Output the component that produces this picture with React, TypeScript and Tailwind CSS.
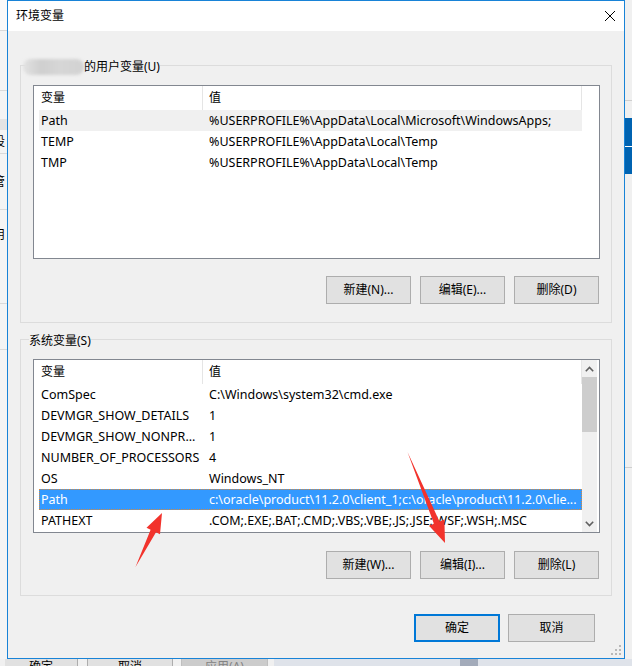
import React from "react";

const FONT = "font-['Noto_Sans','Noto_Sans_CJK_SC',sans-serif]";

const userVars: [string, string][] = [
  ["Path", "%USERPROFILE%\\AppData\\Local\\Microsoft\\WindowsApps;"],
  ["TEMP", "%USERPROFILE%\\AppData\\Local\\Temp"],
  ["TMP", "%USERPROFILE%\\AppData\\Local\\Temp"],
];

const sysVars: [string, string][] = [
  ["ComSpec", "C:\\Windows\\system32\\cmd.exe"],
  ["DEVMGR_SHOW_DETAILS", "1"],
  ["DEVMGR_SHOW_NONPR...", "1"],
  ["NUMBER_OF_PROCESSORS", "4"],
  ["OS", "Windows_NT"],
  ["Path", "c:\\oracle\\product\\11.2.0\\client_1;c:\\oracle\\product\\11.2.0\\clie..."],
  ["PATHEXT", ".COM;.EXE;.BAT;.CMD;.VBS;.VBE;.JS;.JSE;.WSF;.WSH;.MSC"],
];

const Row = ({ name, value, state }: { name: string; value: string; state?: "gray" | "blue" }) => {
  const cls =
    state === "blue"
      ? "bg-[#3399ff] text-white border border-dotted border-[#d9893a]"
      : state === "gray"
      ? "bg-[#f0f0f0] border border-transparent"
      : "border border-transparent";
  return (
    <div className={`flex h-[21px] items-center pt-[2px] text-[12.5px] ${cls}`}>
      <div className="w-[162px] pl-[1px] overflow-hidden whitespace-nowrap">{name}</div>
      <div className="flex-1 pl-[7px] overflow-hidden whitespace-nowrap">{value}</div>
    </div>
  );
};

const Chevron = ({ up }: { up?: boolean }) => (
  <svg width="9" height="6" viewBox="0 0 9 6">
    <path
      d={up ? "M0.8 5.2 L4.5 1.5 L8.2 5.2" : "M0.8 0.8 L4.5 4.5 L8.2 0.8"}
      fill="none"
      stroke="#606060"
      strokeWidth="1.6"
    />
  </svg>
);

const VarList = ({
  rows,
  selected,
  blue,
  scroll,
}: {
  rows: [string, string][];
  selected: number;
  blue?: boolean;
  scroll?: boolean;
}) => (
  <div className="ml-[12px] w-[567px] h-[174px] border border-[#828790] bg-white flex">
    <div className="w-[548px] pl-[5px] flex flex-col">
      <div className="flex h-[24px] items-center">
        <div className="w-[163px] pl-[2px]">变量</div>
        <div className="flex-1 h-full flex items-center pl-[6px] border-l border-r border-[#e5e5e5]">值</div>
      </div>
      {rows.map(([n, v], i) => (
        <Row key={i} name={n} value={v} state={i === selected ? (blue ? "blue" : "gray") : undefined} />
      ))}
    </div>
    {scroll ? (
      <div className="w-[15px] bg-[#f0f0f0] flex flex-col">
        <div className="h-[17px] flex items-center justify-center">
          <Chevron up />
        </div>
        <div className="h-[55px] bg-[#cdcdcd]" />
        <div className="flex-1" />
        <div className="h-[17px] flex items-center justify-center">
          <Chevron />
        </div>
      </div>
    ) : null}
  </div>
);

const Btn = ({ label, def, w }: { label: string; def?: boolean; w: string }) => (
  <div
    className={`${w} h-[28px] flex items-center justify-center bg-[#e1e1e1] ${
      def ? "border-2 border-[#0078d7]" : "border border-[#adadad]"
    }`}
  >
    {label}
  </div>
);

const Group = ({ label, children, h }: { label: React.ReactNode; children: React.ReactNode; h: string }) => (
  <div className={`ml-[12px] w-[592px] ${h} border border-[#dcdcdc] flex flex-col`}>
    <div className="-mt-[8px] ml-[8px] h-[17px] leading-[17px] self-start bg-[#f0f0f0] flex items-center">{label}</div>
    {children}
  </div>
);

const LeftStrip = () => (
  <div className="w-[7px] h-full bg-[#f4f4f4] flex flex-col overflow-hidden text-black">
    <div className="h-[30px] bg-[#f9f9f9]" />
    <div className="h-[1px] bg-[#d9d9d9]" />
    <div className="h-[59px]" />
    <div className="h-[1px] bg-[#dadada]" />
    <div className="h-[28px]" />
    <div className="h-[11px] bg-[#e4e4e4]" />
    <div className="h-[23px] flex items-center">
      <span className="-ml-[7px] whitespace-nowrap">设</span>
    </div>
    <div className="h-[1px] bg-[#dadada]" />
    <div className="h-[55px] flex items-center">
      <span className="-ml-[7px] whitespace-nowrap">管</span>
    </div>
    <div className="h-[1px] bg-[#dadada]" />
    <div className="h-[93px] pt-[16px]">
      <span className="-ml-[7px] whitespace-nowrap">用</span>
    </div>
    <div className="h-[1px] bg-[#dadada]" />
    <div className="h-[45px]" />
    <div className="h-[1px] bg-[#dadada]" />
    <div className="flex-1" />
  </div>
);

const RightStrip = () => (
  <div className="w-[7px] h-full bg-[#f0f0f0] flex flex-col">
    <div className="h-[100px]" />
    <div className="h-[1px] bg-[#cfcfcf]" />
    <div className="h-[17px]" />
    <div className="h-[28px] bg-[#0063b1]" />
    <div className="h-[1px] bg-white" />
    <div className="h-[27px] bg-[#0063b1]" />
    <div className="h-[293px]" />
    <div className="h-[1px] bg-[#cfcfcf]" />
    <div className="flex-1" />
  </div>
);

const BottomStrip = () => (
  <div className="h-[7px] flex overflow-hidden">
    <div className="w-[274px] bg-[#f0f0f0] flex pl-[5px]">
      <div className="w-[73px] h-[20px] bg-[#e1e1e1] border-r border-[#adadad] leading-[16px] text-center">
        确定
      </div>
      <div className="w-[9px]" />
      <div className="w-[86px] h-[20px] bg-[#e1e1e1] border-x border-[#adadad] leading-[16px] text-center">取消</div>
      <div className="w-[8px]" />
      <div className="w-[87px] h-[20px] bg-[#cccccc] border-x border-[#bfbfbf] text-[#838383] leading-[16px] text-center">
        应用(A)
      </div>
    </div>
    <div className="w-[186px] bg-[#dfe3ea]" />
    <div className="w-[18px] bg-[#a3abba]" />
    <div className="flex-1 bg-[#dfe3ea]" />
  </div>
);

const Arrows = () => (
  <svg className="absolute left-0 top-0 pointer-events-none" width="632" height="666" viewBox="0 0 632 666">
    <path d="M135.5 567 L150.6 529.7 L146.5 527.8 L162 513 L160 534.3 L156 532.3 Z" fill="#f2332c" />
    <path d="M407.5 452 L433.9 523.7 L429 525.8 L445 543 L444.4 519.4 L439.5 521.5 Z" fill="#f2332c" />
  </svg>
);

const Grip = () => (
  <svg width="10" height="10" viewBox="0 0 10 10">
    {[
      [8, 0],
      [4, 4],
      [8, 4],
      [0, 8],
      [4, 8],
      [8, 8],
    ].map(([x, y], i) => (
      <rect key={i} x={x} y={y} width="2" height="2" fill="#b8b8b8" />
    ))}
  </svg>
);

export default function App() {
  return (
    <div className={`relative w-[632px] h-[666px] flex flex-col overflow-hidden bg-[#f0f0f0] text-[12px] text-black ${FONT}`}>
      <div className="flex h-[659px]">
        <LeftStrip />
        <div className="w-[618px] h-full border border-[#1883d7] bg-[#f0f0f0] flex flex-col">
          <div className="h-[30px] bg-white flex items-center justify-between pl-[8px] pr-[9px]">
            <span>环境变量</span>
            <svg width="10" height="10" viewBox="0 0 10 10">
              <path d="M0 0 L10 10 M10 0 L0 10" stroke="#000" strokeWidth="1" />
            </svg>
          </div>

          <div className="mt-[34px]">
            <Group
              h="h-[258px]"
              label={
                <>
                  <span className="-ml-[6px] inline-block w-[61px] h-[16px] rounded-full bg-[linear-gradient(90deg,#e2e2e2,#cfcfcf_30%,#d6d6d6_60%,#d2d2d2)] blur-[1.5px]" />
                  <span>的用户变量(U)</span>
                </>
              }
            >
              <div className="mt-[10px]">
                <VarList rows={userVars} selected={0} />
              </div>
              <div className="mt-[17px] pr-[12px] flex justify-end gap-[9px]">
                <Btn w="w-[85px]" label="新建(N)..." />
                <Btn w="w-[85px]" label="编辑(E)..." />
                <Btn w="w-[85px]" label="删除(D)" />
              </div>
            </Group>
          </div>

          <div className="mt-[16px]">
            <Group h="h-[257px]" label={<span>系统变量(S)</span>}>
              <div className="mt-[10px]">
                <VarList rows={sysVars} selected={5} blue scroll />
              </div>
              <div className="mt-[18px] pr-[12px] flex justify-end gap-[9px]">
                <Btn w="w-[85px]" label="新建(W)..." />
                <Btn w="w-[85px]" label="编辑(I)..." />
                <Btn w="w-[85px]" label="删除(L)" />
              </div>
            </Group>
          </div>

          <div className="mt-[18px] pr-[29px] flex justify-end gap-[8px]">
            <Btn w="w-[86px]" label="确定" def />
            <Btn w="w-[87px]" label="取消" />
          </div>
          <div className="mt-[3px] pr-[3px] flex justify-end">
            <Grip />
          </div>
        </div>
        <RightStrip />
      </div>
      <BottomStrip />
      <Arrows />
    </div>
  );
}
